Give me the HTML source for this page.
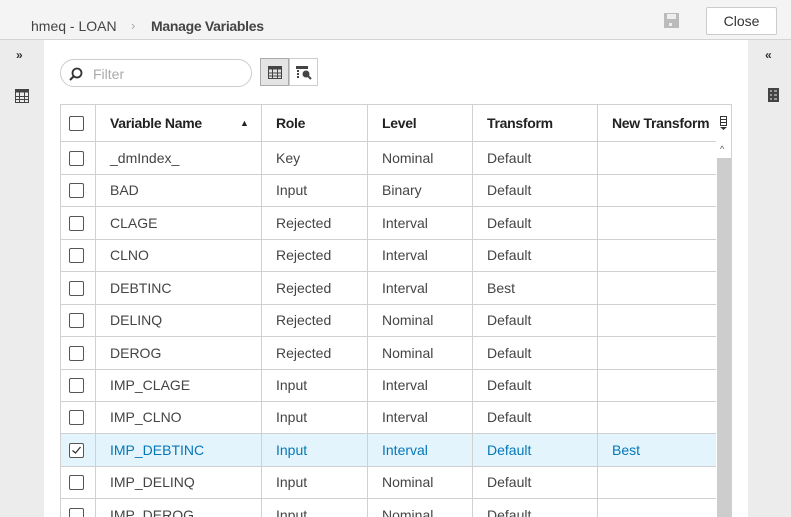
<!DOCTYPE html>
<html><head><style>
*{margin:0;padding:0;box-sizing:border-box}
body{width:791px;height:517px;overflow:hidden;background:#fff;font-family:"Liberation Sans",sans-serif;position:relative;color:#333}
.top{position:absolute;left:0;top:0;width:791px;height:40px;background:#f4f4f4;border-bottom:1px solid #d4d4d4}
.crumb{position:absolute;top:18px;font-size:14px}
.ls{position:absolute;left:0;top:40px;width:44px;height:477px;background:#ececec}
.rs{position:absolute;left:748px;top:40px;width:43px;height:477px;background:#ececec}
.close{position:absolute;left:706px;top:7px;width:71px;height:28px;border:1px solid #ccc;border-radius:2px;background:#fff;font-size:14px;text-align:center;line-height:26px;color:#333}
.filter{position:absolute;left:60px;top:59px;width:192px;height:28px;border:1px solid #ccc;border-radius:14px;background:#fff}
.filter span{position:absolute;left:32px;top:6px;font-size:14px;color:#aaa}
.tb{position:absolute;top:58px;height:28px;width:29px;border:1px solid #ccc}
.tbl{position:absolute;left:60px;top:104px;width:672px;height:413px;border:1px solid #d0d0d0;border-bottom:none;overflow:hidden}
.row{position:absolute;left:0;height:33px;width:655px;border-bottom:1px solid #d0d0d0;font-size:14px;color:#444}
.row div{position:absolute;top:0;height:100%;border-left:1px solid #d0d0d0;padding-left:14px;line-height:32px}
.row .c0{left:0;border-left:none;width:34px}
.cb{position:absolute;left:8px;top:9px;width:15px;height:15px;border:1px solid #555;border-radius:2px;background:#fff}
.hd{font-weight:bold;color:#222;letter-spacing:-0.3px}
.sel{background:#e3f4fc;color:#0478b8}
.scroll{position:absolute;left:655px;top:37px;width:16px;height:380px;background:#fff}
.thumb{position:absolute;left:1px;top:16px;width:15px;height:370px;background:#cdcdcd}
</style></head><body>
<div class="top"></div>
<div class="crumb" style="left:31px;color:#444">hmeq - LOAN</div>
<div class="crumb" style="left:131px;color:#aaa;font-size:13px">›</div>
<div class="crumb" style="left:151px;font-weight:bold;color:#444;letter-spacing:-0.3px">Manage Variables</div>
<svg style="position:absolute;left:664px;top:13px" width="15" height="15"><rect x="0" y="0" width="15" height="15" fill="#bbb"/><rect x="3" y="1" width="9" height="5" fill="#eee"/><rect x="5" y="10" width="3" height="3" fill="#eee"/></svg>
<div class="close">Close</div>
<div class="ls"></div><div class="rs"></div>
<div style="position:absolute;left:16px;top:48px;font-size:12px;font-weight:bold;color:#333">»</div>
<svg style="position:absolute;left:15px;top:89px" width="14" height="14"><rect x="0.5" y="0.5" width="13" height="13" fill="none" stroke="#444"/><rect x="0.5" y="0.5" width="13" height="3" fill="#444"/><path d="M0 7.5H14M0 10.5H14M4.5 0V14M9.5 0V14" stroke="#444"/></svg>
<div style="position:absolute;left:765px;top:48px;font-size:12px;font-weight:bold;color:#333">«</div>
<svg style="position:absolute;left:768px;top:88px" width="11" height="14"><rect width="11" height="14" fill="#444"/><path d="M2 3H4M6 3H9M2 7H4M6 7H9M2 11H4M6 11H9" stroke="#eee"/></svg>
<div class="filter"><svg style="position:absolute;left:8px;top:7px" width="14" height="14"><circle cx="8" cy="6" r="4.5" fill="none" stroke="#333" stroke-width="1.8"/><path d="M5 9L1 13" stroke="#333" stroke-width="2"/></svg><span>Filter</span></div>
<div class="tb" style="left:260px;background:#e4e4e4;border-color:#aaa"><svg style="position:absolute;left:7px;top:7px" width="14" height="13"><rect x="0.5" y="0.5" width="13" height="12" fill="none" stroke="#444"/><rect x="0.5" y="0.5" width="13" height="3" fill="#444"/><path d="M0 7H14M0 10H14M4.5 0V13M9.5 0V13" stroke="#444"/></svg></div>
<div class="tb" style="left:289px;background:#fff"><svg style="position:absolute;left:6px;top:7px" width="16" height="14"><rect x="0" y="0" width="12" height="3" fill="#444"/><path d="M1 5H3M1 8H3M1 11H3" stroke="#444" stroke-width="2"/><circle cx="10" cy="8" r="3.5" fill="#444"/><path d="M12 10L15 13" stroke="#444" stroke-width="2"/></svg></div>

<div class="tbl">
<div class="row hd" style="top:0;height:37px"><div class="c0"><span class="cb" style="top:11px"></span></div><div style="left:34px;line-height:36px">Variable Name<span style="position:absolute;left:144px;font-size:9px">▲</span></div><div style="left:200px;line-height:36px">Role</div><div style="left:306px;line-height:36px">Level</div><div style="left:411px;line-height:36px">Transform</div><div style="left:536px;line-height:36px;width:120px">New Transform<svg style="position:absolute;left:122px;top:11px" width="7" height="14"><rect x="0.5" y="0.5" width="6" height="9" fill="none" stroke="#333"/><path d="M0 3.5H7M0 6.5H7" stroke="#333"/><path d="M0 11H7L3.5 14Z" fill="#333"/></svg></div></div>
<div class="row" style="top:37px"><div class="c0"><span class="cb"></span></div><div style="left:34px">_dmIndex_</div><div style="left:200px">Key</div><div style="left:306px">Nominal</div><div style="left:411px">Default</div><div style="left:536px"></div></div>
<div class="row" style="top:69px"><div class="c0"><span class="cb"></span></div><div style="left:34px">BAD</div><div style="left:200px">Input</div><div style="left:306px">Binary</div><div style="left:411px">Default</div><div style="left:536px"></div></div>
<div class="row" style="top:102px"><div class="c0"><span class="cb"></span></div><div style="left:34px">CLAGE</div><div style="left:200px">Rejected</div><div style="left:306px">Interval</div><div style="left:411px">Default</div><div style="left:536px"></div></div>
<div class="row" style="top:134px"><div class="c0"><span class="cb"></span></div><div style="left:34px">CLNO</div><div style="left:200px">Rejected</div><div style="left:306px">Interval</div><div style="left:411px">Default</div><div style="left:536px"></div></div>
<div class="row" style="top:167px"><div class="c0"><span class="cb"></span></div><div style="left:34px">DEBTINC</div><div style="left:200px">Rejected</div><div style="left:306px">Interval</div><div style="left:411px">Best</div><div style="left:536px"></div></div>
<div class="row" style="top:199px"><div class="c0"><span class="cb"></span></div><div style="left:34px">DELINQ</div><div style="left:200px">Rejected</div><div style="left:306px">Nominal</div><div style="left:411px">Default</div><div style="left:536px"></div></div>
<div class="row" style="top:232px"><div class="c0"><span class="cb"></span></div><div style="left:34px">DEROG</div><div style="left:200px">Rejected</div><div style="left:306px">Nominal</div><div style="left:411px">Default</div><div style="left:536px"></div></div>
<div class="row" style="top:264px"><div class="c0"><span class="cb"></span></div><div style="left:34px">IMP_CLAGE</div><div style="left:200px">Input</div><div style="left:306px">Interval</div><div style="left:411px">Default</div><div style="left:536px"></div></div>
<div class="row" style="top:296px"><div class="c0"><span class="cb"></span></div><div style="left:34px">IMP_CLNO</div><div style="left:200px">Input</div><div style="left:306px">Interval</div><div style="left:411px">Default</div><div style="left:536px"></div></div>
<div class="row sel" style="top:329px"><div class="c0"><span class="cb"><svg width="13" height="13" style="position:absolute;left:0;top:0"><path d="M2.5 6.5L5.5 9L10.5 3" fill="none" stroke="#333" stroke-width="1.3"/></svg></span></div><div style="left:34px">IMP_DEBTINC</div><div style="left:200px">Input</div><div style="left:306px">Interval</div><div style="left:411px">Default</div><div style="left:536px">Best</div></div>
<div class="row" style="top:361px"><div class="c0"><span class="cb"></span></div><div style="left:34px">IMP_DELINQ</div><div style="left:200px">Input</div><div style="left:306px">Nominal</div><div style="left:411px">Default</div><div style="left:536px"></div></div>
<div class="row" style="top:394px"><div class="c0"><span class="cb"></span></div><div style="left:34px">IMP_DEROG</div><div style="left:200px">Input</div><div style="left:306px">Nominal</div><div style="left:411px">Default</div><div style="left:536px"></div></div>
<div class="scroll"><div style="position:absolute;left:4px;top:2px;font-size:9px;color:#555">^</div><div class="thumb"></div></div>
</div>
</body></html>
